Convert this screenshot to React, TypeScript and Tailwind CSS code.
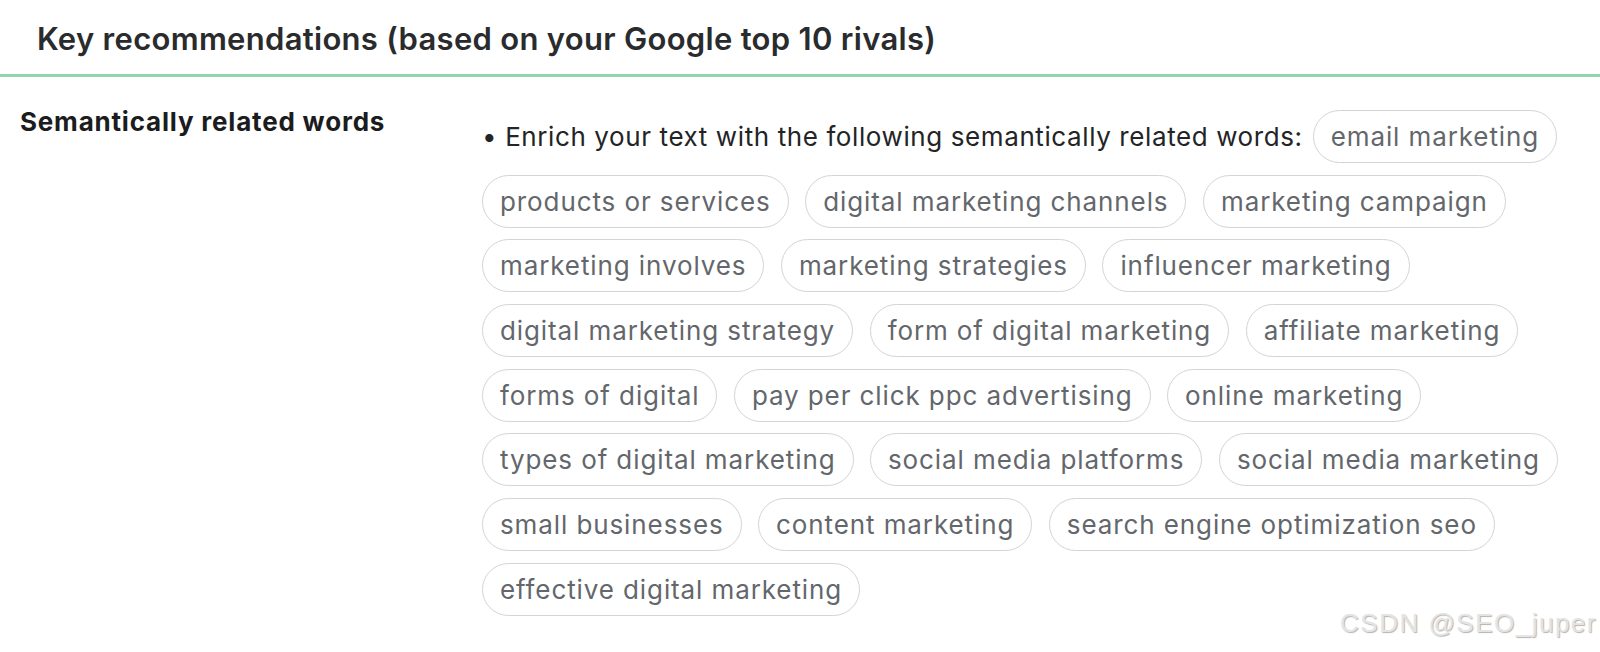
import React from 'react';

const words: string[] = [
  'email marketing',
  'products or services',
  'digital marketing channels',
  'marketing campaign',
  'marketing involves',
  'marketing strategies',
  'influencer marketing',
  'digital marketing strategy',
  'form of digital marketing',
  'affiliate marketing',
  'forms of digital',
  'pay per click ppc advertising',
  'online marketing',
  'types of digital marketing',
  'social media platforms',
  'social media marketing',
  'small businesses',
  'content marketing',
  'search engine optimization seo',
  'effective digital marketing',
];

const Chip = ({ label }: { label: string }) => (
  <span className="mr-[16.5px] inline-flex h-[53px] items-center rounded-full border-[1.5px] border-[#d3d4d6] pr-[17px] pl-[17px] text-[26px] tracking-[0.9px] text-[#63676c]">
    {label}
  </span>
);

export default function App() {
  return (
    <div className="relative h-[652px] w-[1600px] overflow-hidden bg-white font-['Inter','Noto_Sans',sans-serif]">
      <div className="flex h-[77px] items-center border-b-[3px] border-[#8fd6ad] pt-[4px] pl-[37px]">
        <h1 className="text-[31px] font-semibold tracking-[0.3px] text-[#2a2b2d]">
          Key recommendations (based on your Google top 10 rivals)
        </h1>
      </div>

      <div className="flex pt-[28px]">
        <div className="w-[482px] shrink-0 pl-[20px]">
          <h2 className="text-[26px] leading-[34px] font-bold tracking-[0.8px] text-[#1b1c1e]">Semantically related words</h2>
        </div>
        <div className="flex flex-1 flex-wrap items-center gap-y-[11.7px] pt-[5px]">
          <span className="mr-[10px] text-[26px] tracking-[0.6px] text-[#232426]">• Enrich your text with the following semantically related words:</span>
          {words.map((w) => (
            <Chip key={w} label={w} />
          ))}
        </div>
      </div>

      <div className="absolute right-[3px] bottom-[16px] font-['Liberation_Sans',Arial,sans-serif] text-[26px] leading-none tracking-[1.5px] text-[#e4e4e4] [text-shadow:1px_1px_1px_#b4b4b4]">
        CSDN @SEO_juper
      </div>
    </div>
  );
}
